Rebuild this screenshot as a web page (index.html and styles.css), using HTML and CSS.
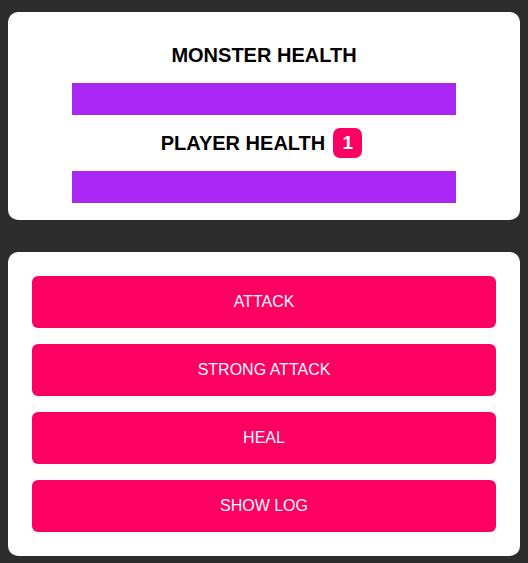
FILE: index.html
```html
<!DOCTYPE html>
<html>
<head>
<meta charset="utf-8">
<link rel="stylesheet" href="styles.css">
</head>
<body>
<div class="game">
  <section class="card stats">
    <h2 class="label">MONSTER HEALTH</h2>
    <div class="bar"><div class="bar-fill" style="width:100%"></div></div>
    <h2 class="label label-badged">PLAYER HEALTH <span class="badge">1</span></h2>
    <div class="bar"><div class="bar-fill" style="width:100%"></div></div>
  </section>
  <section class="card controls">
    <button class="action">ATTACK</button>
    <button class="action">STRONG ATTACK</button>
    <button class="action">HEAL</button>
    <button class="action">SHOW LOG</button>
  </section>
</div>
</body>
</html>
```
FILE: styles.css
```css
html, body {
  margin: 0;
  padding: 0;
  background: #2c2c2c;
  font-family: "Liberation Sans", Arial, sans-serif;
}
.game {
  padding: 12px 8px 0;
  display: flex;
  flex-direction: column;
  gap: 32px;
}
.card {
  background: #fff;
  border-radius: 10px;
}
.stats {
  padding: 31px 0 17px;
  display: flex;
  flex-direction: column;
  align-items: center;
  gap: 16px;
}
.label {
  margin: 0;
  font-size: 20px;
  line-height: 24px;
  font-weight: bold;
  color: #000;
  display: flex;
  align-items: center;
  gap: 8px;
}
.label-badged {
  padding-right: 5px;
}
.badge {
  display: inline-flex;
  align-items: center;
  justify-content: center;
  width: 29px;
  height: 30px;
  border-radius: 7px;
  background: #ff0062;
  color: #fff;
  font-size: 19px;
  margin: -3px 0;
}
.bar {
  width: 384px;
  height: 32px;
  background: #fff;
}
.bar-fill {
  height: 100%;
  background: #a827f2;
}
.controls {
  padding: 24px;
  display: flex;
  flex-direction: column;
  gap: 16px;
}
.action {
  height: 52px;
  border: none;
  border-radius: 6px;
  background: #ff0062;
  color: #fff;
  font-family: "Liberation Sans", Arial, sans-serif;
  font-size: 16px;
  padding: 0;
  cursor: pointer;
}
```
